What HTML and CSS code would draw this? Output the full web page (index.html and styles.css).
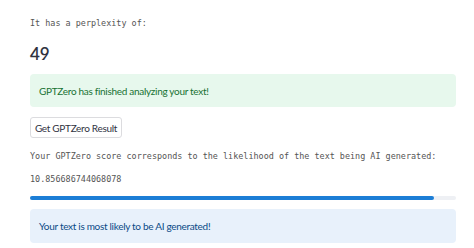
FILE: index.html
```html
<!DOCTYPE html>
<html lang="en">
<head>
    <meta charset="UTF-8">
    <meta name="viewport" content="width=device-width, initial-scale=1.0">
    <title>GPTZero</title>
    <link rel="stylesheet" href="styles.css">
</head>
<body>

<div class="main">
    <p class="mono first">It has a perplexity of:</p>

    <h2 class="score">49</h2>

    <!-- Aviso de éxito -->
    <div class="alert alert-success">GPTZero has finished analyzing your text!</div>

    <div class="btn-row">
        <button class="btn">Get GPTZero Result</button>
    </div>

    <p class="mono likelihood">Your GPTZero score corresponds to the likelihood of the text being AI generated:</p>
    <p class="mono number">10.856686744068078</p>

    <div class="progress">
        <div class="progress-bar" style="width: 94.9%"></div>
    </div>

    <!-- Resultado -->
    <div class="alert alert-info">Your text is most likely to be AI generated!</div>
</div>

</body>
</html>
```

FILE: styles.css
```css
* {
    box-sizing: border-box;
    margin: 0;
}

body {
    background-color: #ffffff;
    font-family: Lato, "Noto Sans", sans-serif;
    color: #31333f;
}

.main {
    width: 456px;
    padding: 17px 0 0 30px;
    display: flex;
    flex-direction: column;
}

.mono {
    font-family: "DejaVu Sans Mono", monospace;
    font-size: 8.45px;
    line-height: 12px;
    height: 12px;
    color: #555;
    white-space: nowrap;
}

.score {
    margin-top: 15px;
    font-size: 17px;
    line-height: 20px;
    font-weight: 600;
    color: #31333f;
}

.alert {
    border-radius: 4px;
    font-size: 10px;
    letter-spacing: -0.3px;
    padding: 0 9px;
    display: flex;
    align-items: center;
}

.alert-success {
    margin-top: 10px;
    height: 33px;
    background-color: #e7f8ed;
    color: #177233;
}

.alert-info {
    margin-top: 9px;
    height: 34px;
    background-color: #e8f1fb;
    color: #0b4a86;
}

.btn-row {
    margin-top: 10px;
    display: flex;
}

.btn {
    height: 21px;
    width: 92px;
    padding: 0;
    white-space: nowrap;
    font-family: Lato, "Noto Sans", sans-serif;
    font-size: 10px;
    letter-spacing: -0.3px;
    color: #31333f;
    background: #fff;
    border: 1px solid #dcdcdf;
    border-radius: 3px;
}

.likelihood {
    margin-top: 12px;
}

.number {
    margin-top: 11px;
}

.progress {
    margin-top: 11px;
    height: 4px;
    border-radius: 2px;
    background-color: #eef0f4;
}

.progress-bar {
    height: 4px;
    border-radius: 2px;
    background-color: #1c7ed6;
}
```
